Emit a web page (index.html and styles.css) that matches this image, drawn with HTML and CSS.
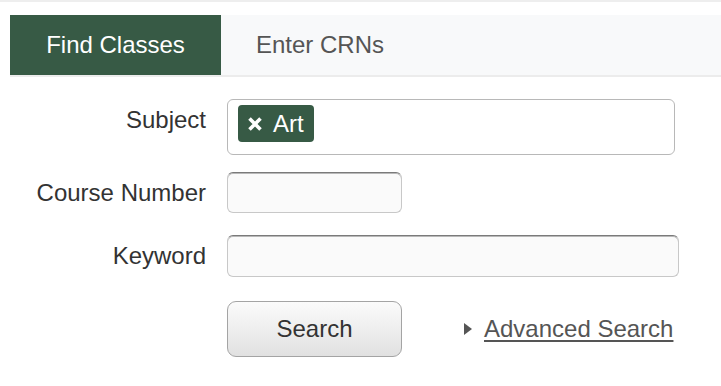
FILE: index.html
```html
<!DOCTYPE html>
<html lang="en">
<head>
    <meta charset="UTF-8">
    <title>Class Search</title>
    <link rel="stylesheet" href="styles.css">
</head>
<body>
    <div class="top-rule"></div>
    <div class="search-panel">
        <ul class="tabs">
            <li class="tab active">Find Classes</li>
            <li class="tab">Enter CRNs</li>
        </ul>

        <form class="search-form">
            <div class="field subject-field">
                <label>Subject</label>
                <div class="select-box">
                    <span class="chip">
                        <svg class="chip-x" width="16" height="16" viewBox="0 0 16 16">
                            <path d="M2.5 2.5 L13.5 13.5 M13.5 2.5 L2.5 13.5" stroke="#fff" stroke-width="3.6" />
                        </svg>
                        Art
                    </span>
                </div>
            </div>
            <div class="field course-field">
                <label for="course-number">Course Number</label>
                <input type="text" id="course-number" class="input short">
            </div>
            <div class="field">
                <label for="keyword">Keyword</label>
                <input type="text" id="keyword" class="input wide">
            </div>
            <div class="field actions">
                <span class="spacer"></span>
                <button type="button" class="btn">Search</button>
                <a href="#" class="advanced-link"><span class="arrow"></span><span class="link-text">Advanced Search</span></a>
            </div>
        </form>
    </div>
</body>
</html>
```

FILE: styles.css
```css
body {
    margin: 0;
    font-family: "Liberation Sans", Arial, sans-serif;
    font-size: 24px;
    color: #333;
    background: #fff;
}

.top-rule {
    height: 2px;
    background-color: #eeeeee;
}

.search-panel {
    padding-top: 13px;
}

.tabs {
    list-style: none;
    margin: 0 0 0 10px;
    padding: 0;
    display: flex;
    background-color: #f8f9fa;
    border-bottom: 2px solid #ececec;
}

.tabs .tab {
    height: 60px;
    line-height: 60px;
    padding: 0 36px 0 35px;
    color: #555;
}

.tabs .tab.active {
    width: 211px;
    padding: 0;
    text-align: center;
    background-color: #375a45;
    color: #fff;
}

.search-form {
    padding-top: 22px;
}

.field {
    display: flex;
    align-items: center;
    margin-bottom: 19px;
}

.field label,
.field .spacer {
    width: 206px;
    margin-right: 21px;
    text-align: right;
    flex-shrink: 0;
}

.subject-field {
    align-items: flex-start;
    margin-bottom: 17px;
}

.subject-field label {
    padding-top: 7px;
}

.course-field {
    margin-bottom: 22px;
}

.select-box {
    width: 436px;
    height: 54px;
    border: 1px solid #b8b8b8;
    border-radius: 6px;
    padding: 0 0 0 10px;
    display: flex;
    align-items: center;
}

.chip {
    display: inline-flex;
    align-items: center;
    height: 37px;
    padding: 0 10px 0 9px;
    background-color: #375a45;
    color: #fff;
    border-radius: 4px;
    margin-top: -7px;
}

.chip-x {
    margin-right: 10px;
}

.input {
    height: 39px;
    border: 1px solid #c8c8c8;
    border-top-color: #7a7a7a;
    border-radius: 6px;
    background-color: #fafafa;
    box-shadow: inset 0 1px 0 #b8b8b8;
    padding: 0 8px;
    font-family: inherit;
    font-size: 20px;
    outline: none;
}

.input.short {
    width: 157px;
}

.input.wide {
    width: 434px;
    height: 40px;
}

.field.actions {
    margin-top: 24px;
}

.btn {
    width: 175px;
    height: 56px;
    border: 1px solid #a4a4a4;
    border-radius: 9px;
    background: linear-gradient(to bottom, #fbfbfb, #e1e1e1);
    font-family: inherit;
    font-size: 24px;
    color: #333;
    cursor: pointer;
}

.advanced-link {
    display: flex;
    align-items: center;
    margin-left: 62px;
    color: #555;
    text-decoration: none;
}

.advanced-link .arrow {
    width: 0;
    height: 0;
    border-top: 6px solid transparent;
    border-bottom: 6px solid transparent;
    border-left: 8px solid #555;
    margin-right: 12px;
}

.advanced-link .link-text {
    text-decoration: underline;
    text-decoration-thickness: 2px;
    text-underline-offset: 3px;
}
```
